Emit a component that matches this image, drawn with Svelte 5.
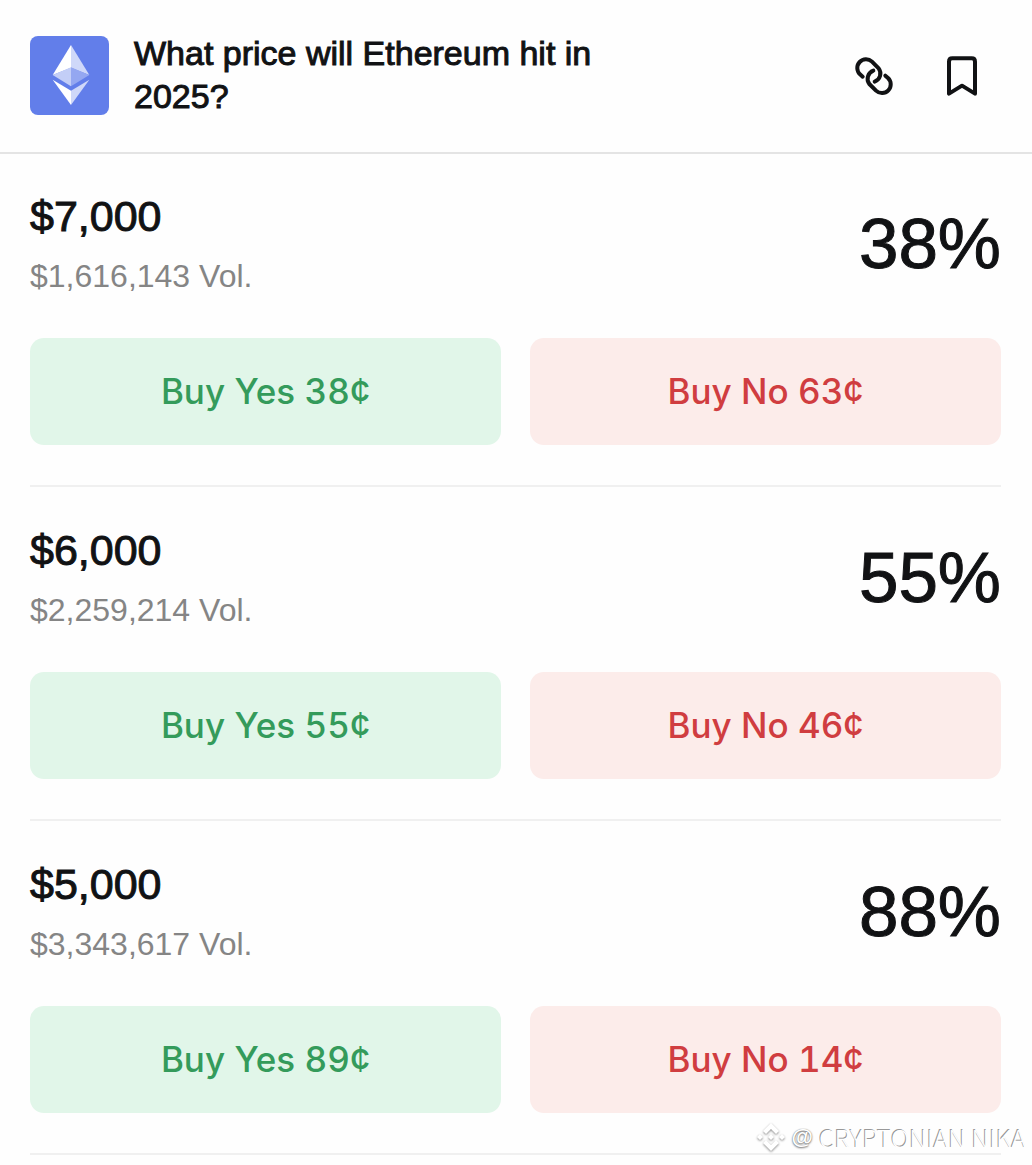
<script lang="ts">
  type Outcome = { price: string; volume: string; chance: number; yes: number; no: number };

  const title = "What price will Ethereum hit in 2025?";

  const outcomes: Outcome[] = [
    { price: "$7,000", volume: "$1,616,143", chance: 38, yes: 38, no: 63 },
    { price: "$6,000", volume: "$2,259,214", chance: 55, yes: 55, no: 46 },
    { price: "$5,000", volume: "$3,343,617", chance: 88, yes: 89, no: 14 },
  ];
</script>

<main class="market">
  <header class="head">
    <svg class="logo" viewBox="0 0 237 237" aria-hidden="true">
      <rect width="237" height="237" rx="24" fill="#627eea" />
      <path d="M123 27 68 117 123 95Z" fill="#fff" />
      <path d="M123 27 178 117 123 95Z" fill="#cfd8f9" />
      <path d="M68 117 123 94V151Z" fill="#c3cef7" />
      <path d="M178 117 123 94V151Z" fill="#94a7f1" />
      <path d="M68 131 123 164V207Z" fill="#fff" />
      <path d="M178 131 123 164V207Z" fill="#cfd8f9" />
    </svg>
    <h1>{title}</h1>
    <div class="tools">
      <button type="button" class="tool" aria-label="Copy link">
        <svg viewBox="42 46 120 120" aria-hidden="true">
          <path d="M68 108 60 101A26 26 0 0 1 96 63L116 83A26 26 0 0 1 104 123" />
          <path d="M100 90A26 26 0 0 0 88 130L108 150A26 26 0 0 0 144 112L136 105" />
        </svg>
      </button>
      <button type="button" class="tool" aria-label="Bookmark">
        <svg viewBox="306 47 120 120" aria-hidden="true">
          <path d="M327 160V64Q327 54 337 54H395Q405 54 405 64V160L366 136Z" />
        </svg>
      </button>
    </div>
  </header>

  {#each outcomes as outcome}
    <section class="outcome">
      <div class="info">
        <div>
          <h2>{outcome.price}</h2>
          <p class="volume">{outcome.volume} Vol.</p>
        </div>
        <p class="chance">{outcome.chance}%</p>
      </div>
      <div class="actions">
        <button type="button" class="buy yes">Buy Yes {outcome.yes}¢</button>
        <button type="button" class="buy no">Buy No {outcome.no}¢</button>
      </div>
    </section>
  {/each}

  <div class="credit">
    <svg viewBox="0 0 28 28" aria-hidden="true">
      <path d="M14 0 22 8 19 11 14 6 9 11 6 8ZM3 11 6 14 3 17 0 14ZM25 11 28 14 25 17 22 14ZM14 11 17 14 14 17 11 14ZM6 20 9 17 14 22 19 17 22 20 14 28Z" />
    </svg>
    <span class="at">@</span>
    <span class="name">CRYPTONIAN NIKA</span>
  </div>
</main>

<style>
  :global(body) {
    margin: 0;
    background: #fefefe;
  }
  .market {
    position: relative;
    min-height: 100vh;
    font-family: "Liberation Sans", Arial, sans-serif;
    color: #111214;
  }
  h1,
  h2,
  p {
    margin: 0;
  }
  .head {
    display: flex;
    align-items: center;
    gap: 25px;
    padding: 32px 50px 33px 30px;
    border-bottom: 2px solid #e4e4e4;
  }
  .logo {
    flex: none;
    width: 79px;
    height: 79px;
  }
  /* a thin stroke stands in for the medium weight */
  h1,
  h2,
  .chance {
    font-weight: 400;
    -webkit-text-stroke: 1px currentColor;
  }
  h1 {
    flex: 1;
    max-width: 500px;
    padding-bottom: 1px;
    font-size: 34px;
    line-height: 43px;
  }
  .tools {
    display: flex;
    gap: 48px;
    margin-left: auto;
  }
  .tool {
    width: 40px;
    height: 40px;
    padding: 0;
    border: 0;
    background: none;
    cursor: pointer;
  }
  .tool svg {
    display: block;
    fill: none;
    stroke: #111214;
    stroke-width: 12;
    stroke-linecap: round;
    stroke-linejoin: round;
  }
  .outcome {
    margin: 0 31px 0 30px;
    padding: 34px 0 40px;
    border-bottom: 2px solid #f0f0f0;
  }
  .info {
    display: flex;
    justify-content: space-between;
    align-items: center;
    margin-bottom: 38px;
  }
  .outcome + .outcome .info {
    padding-top: 1px;
  }
  h2 {
    font-size: 43px;
    line-height: 56px;
  }
  .volume {
    padding-top: 8px;
    font-size: 32px;
    line-height: 48px;
    color: #858585;
  }
  .chance {
    font-size: 71px;
    line-height: 112px;
  }
  .actions {
    display: grid;
    grid-template-columns: 1fr 1fr;
    gap: 29px;
  }
  .buy {
    height: 107px;
    padding: 0 0 2px;
    border: 0;
    border-radius: 14px;
    font-family: Inter, "Liberation Sans", sans-serif;
    font-size: 35px;
    font-weight: 500;
    font-variant-numeric: tabular-nums;
    cursor: pointer;
  }
  .yes {
    background: #e1f6e9;
    color: #349b5b;
  }
  .no {
    background: #fcecea;
    color: #d03d40;
  }
  .credit {
    position: absolute;
    right: 6px;
    bottom: 12px;
    display: flex;
    align-items: center;
    gap: 6px;
    font-family: "Noto Sans CJK SC", sans-serif;
    line-height: 32px;
    color: #fff;
  }
  .credit svg {
    width: 28px;
    height: 28px;
    fill: #fff;
    overflow: visible;
    filter: drop-shadow(0 1px 1px #888);
  }
  .at {
    font-family: "Liberation Sans", Arial, sans-serif;
    font-size: 22px;
    font-weight: 700;
    text-shadow: 0 1px 2px #666, 0 0 1px #888;
  }
  .name {
    font-size: 25px;
    font-weight: 300;
    text-shadow: -1px -1px 0 #999;
  }
</style>
